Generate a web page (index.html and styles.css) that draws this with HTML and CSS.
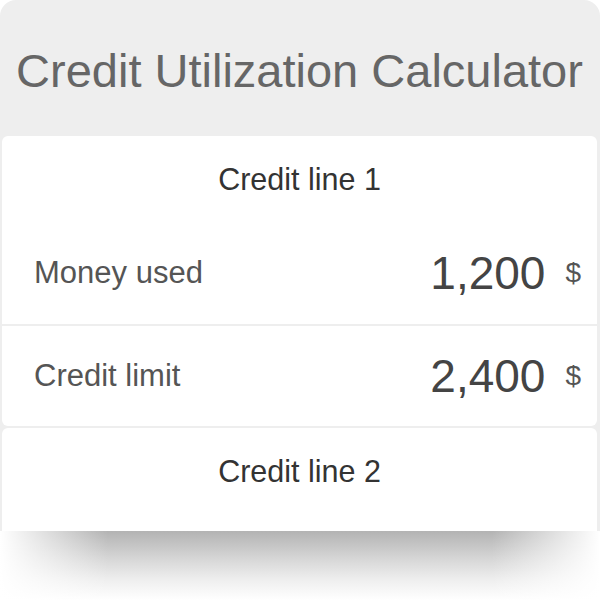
FILE: index.html
```html
<!DOCTYPE html>
<html lang="en">
<head>
    <meta charset="UTF-8">
    <title>Credit Utilization Calculator</title>
    <link rel="stylesheet" href="styles.css">
</head>
<body>

    <div class="calc">
        <h1 class="calc__title">Credit Utilization Calculator</h1>

        <section class="calc__group">
            <h2 class="calc__group-title">Credit line 1</h2>
            <div class="calc__row">
                <label class="calc__label" for="used-1">Money used</label>
                <input class="calc__input" id="used-1" value="1,200">
                <span class="calc__unit">$</span>
            </div>
            <div class="calc__row">
                <label class="calc__label" for="limit-1">Credit limit</label>
                <input class="calc__input" id="limit-1" value="2,400">
                <span class="calc__unit">$</span>
            </div>
        </section>

        <section class="calc__group">
            <h2 class="calc__group-title">Credit line 2</h2>
        </section>
    </div>

</body>
</html>
```

FILE: styles.css
```css
html {
  box-sizing: border-box;
}

*,
*::before,
*::after {
  box-sizing: inherit;
}

body {
  margin: 0;
  min-height: 100vh;
  background-color: #fff;
  font-family: "Liberation Sans", Arial, sans-serif;
}

h1,
h2 {
  margin: 0;
  font-weight: 400;
}

input {
  border: 0;
  border-radius: 0;
  background-color: transparent;
  font-family: inherit;
  outline: none;
  appearance: none;
  padding: 0;
}

/* widget frame, cut off at the bottom */

.calc {
  background-color: #eee;
  border-radius: 16px 16px 0 0;
  height: 531px;
  overflow: hidden;
  padding: 0 3px 0 2px;
}

.calc__title {
  color: #666;
  font-size: 47px;
  height: 136px;
  line-height: 130px;
  padding-top: 6px;
  text-align: center;
  white-space: nowrap;
}

.calc__group {
  background-color: #fff;
  border-radius: 6px;
  margin-bottom: 2px;
}

.calc__group:last-child {
  height: 120px;
}

.calc__group-title {
  color: #333;
  font-size: 30.5px;
  height: 86px;
  line-height: 86px;
  text-align: center;
}

.calc__row {
  align-items: center;
  display: flex;
  height: 102px;
  padding: 0 16px 0 32px;
}

.calc__row + .calc__row {
  border-top: 2px solid #eee;
}

.calc__label {
  color: #555;
  flex: 1;
  font-size: 31px;
}

.calc__input {
  color: #444;
  font-size: 46px;
  text-align: right;
  width: 200px;
}

.calc__unit {
  color: #555;
  font-size: 28px;
  margin-left: 20px;
}

/* shadow under the cut edge */
body::after {
  content: "";
  display: block;
  height: 69px;
  background:
    linear-gradient(to right, #fff, rgba(255, 255, 255, 0) 18%, rgba(255, 255, 255, 0) 82%, #fff),
    linear-gradient(to bottom, #b3b3b3, #d6d6d6 40%, #eee 70%, #fff);
}
```
